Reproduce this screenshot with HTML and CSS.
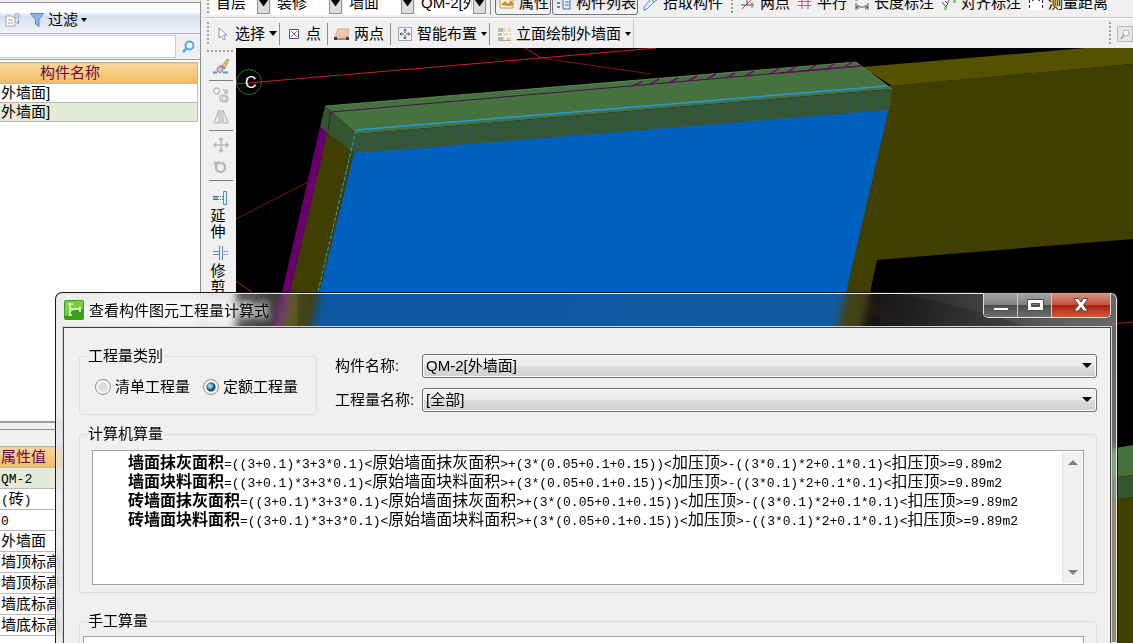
FILE: index.html
```html
<!DOCTYPE html>
<html lang="zh-CN">
<head>
<meta charset="utf-8">
<title>查看构件图元工程量计算式</title>
<link rel="stylesheet" href="styles.css">
</head>
<body>
<div class="app">
  <aside class="side">
    <div class="filter-bar">
      <svg class="ico" viewBox="0 0 16 16"><path d="M1 4h6l3 3v7H1z" fill="#fff" stroke="#a4a8b4"/><path d="M3 8h5M3 11h5M10 2h4v4h-4z" fill="none" stroke="#a4a8b4"/><path d="M13.500 8v3h-2" fill="none" stroke="#6a80b8"/></svg>
      <button class="filter-btn"><svg class="ico" viewBox="0 0 16 16"><path d="M1.500 1.500h13L10 7.500v7L6.500 12V7.500z" fill="#8fb4e8" stroke="#5b84c8"/></svg><span>过滤</span><svg class="caret" viewBox="0 0 6 4"><path d="M0 0h6L3 4z"/></svg></button>
    </div>
    <div class="search">
      <input type="text" aria-label="搜索构件">
      <button aria-label="搜索"><svg class="ico" viewBox="0 0 16 16"><circle cx="9.500" cy="6.500" r="4" fill="#e8f6ff" stroke="#5fa8dc" stroke-width="2"/><path d="M6.500 9.500L3 13" stroke="#5fa8dc" stroke-width="2.500"/></svg></button>
    </div>
    <table class="names">
      <thead><tr><th>构件名称</th></tr></thead>
      <tbody><tr><td>外墙面]</td></tr><tr class="on"><td>外墙面]</td></tr></tbody>
    </table>
    <div class="divider"></div>
    <table class="props">
      <thead><tr><th>属性值</th></tr></thead>
      <tbody>
        <tr class="on"><td><code>QM-2</code></td></tr><tr><td><code>(</code>砖<code>)</code></td></tr><tr><td><code>0</code></td></tr><tr><td>外墙面</td></tr>
        <tr><td>墙顶标高</td></tr><tr><td>墙顶标高</td></tr><tr><td>墙底标高</td></tr><tr><td>墙底标高</td></tr><tr><td></td></tr>
      </tbody>
    </table>
  </aside>

  <main class="work">
    <div class="bar bar-top">
      <i class="grip"></i>
      <span class="combo short"><select aria-label="楼层"><option>首层</option></select><svg viewBox="0 0 12 26"><path d="M1 12h10L6 19z"/></svg></span>
      <span class="combo"><select aria-label="类型"><option>装修</option></select><svg viewBox="0 0 12 26"><path d="M1 12h10L6 19z"/></svg></span>
      <span class="combo"><select aria-label="构件类型"><option>墙面</option></select><svg viewBox="0 0 12 26"><path d="M1 12h10L6 19z"/></svg></span>
      <span class="combo"><select aria-label="构件"><option>QM-2[外墙面]</option></select><svg viewBox="0 0 12 26"><path d="M1 12h10L6 19z"/></svg></span>
      <i class="sep wide"></i>
      <button class="tool on"><svg class="ico" viewBox="0 0 16 16"><path d="M1 1h13v12H1z" fill="#fff3cf" stroke="#c99a50"/><path d="M2 10l4-4 3 3 3-4 3 5-4 1z" fill="#c98a3a"/></svg>属性</button>
      <button class="tool on"><svg class="ico" viewBox="0 0 16 16"><path d="M7 1h7v13H7z" fill="#eef4ff" stroke="#3f66b0"/><path d="M9 4h4M9 7h4M9 10h4" stroke="#3f66b0"/><path d="M1 3h3v2H1zM1 7h3v2H1zM1 11h3v2H1z" fill="#6c7fae"/></svg>构件列表</button>
      <button class="tool"><svg class="ico" viewBox="0 0 16 16"><path d="M1 12l7-8 3 3-7 7-3 1zM8 4l2-3 4 4-3 2z" fill="#dbe9fb" stroke="#5a8acb"/></svg>拾取构件</button>
      <i class="grip spaced"></i>
      <button class="tool"><svg class="ico" viewBox="0 0 16 16"><path d="M7 0v10M1 10h13" stroke="#555"/><path d="M2 14L13 3" stroke="#c04848"/><path d="M12 7v6" stroke="#777"/></svg>两点</button>
      <button class="tool"><svg class="ico" viewBox="0 0 16 16"><path d="M5 1v13M11 1v13" stroke="#5a6cb0"/><path d="M1 6.500h13M1 10.500h13" stroke="#b06868"/></svg>平行</button>
      <button class="tool"><svg class="ico" viewBox="0 0 16 16"><path d="M2 8v7M14 8v7M2 12h12M5 10l-3 2 3 2M11 10l3 2-3 2" fill="none" stroke="#555"/><path d="M1 3h3v3H1z" fill="#85c985"/></svg>长度标注</button>
      <button class="tool"><svg class="ico" viewBox="0 0 16 16"><path d="M1 7l4 5 3-7M4 6l3 3" fill="none" stroke="#555"/><path d="M12 5h3v3h-3zM3 12h3v3H3z" fill="#85c985"/></svg>对齐标注</button>
      <button class="tool"><svg class="ico" viewBox="0 0 16 16"><path d="M1 1h14v14H1z" fill="#fff"/><path d="M1.500 0v15M14.500 0v15M4 6l3-2M12 6L9 4" stroke="#222" stroke-dasharray="3 2"/></svg>测量距离</button>
    </div>
    <div class="bar bar-draw">
      <i class="grip"></i>
      <button class="cmd menu"><svg class="ico" viewBox="0 0 16 16"><path d="M4 2v10l2.500-2 2 4 2-1-2-4H12z" fill="#fff" stroke="#8a93a8"/></svg>选择<svg class="caret big" viewBox="0 0 8 5"><path d="M0 0h8L4 5z"/></svg></button>
      <i class="sep"></i>
      <button class="cmd"><svg class="ico" viewBox="0 0 16 16"><path d="M3.500 3.500h9v9h-9z" fill="#fff" stroke="#3f55b8"/><path d="M5 5l6 6M11 5l-6 6" stroke="#c06060"/></svg>点</button>
      <i class="sep"></i>
      <button class="cmd"><svg class="ico" viewBox="0 0 16 16"><path d="M4 3h11l-1 8H1z" fill="#f4c8ac" stroke="#d8a890"/><path d="M1 13h13" stroke="#333"/><path d="M0 11h3v3H0zM12 11h3v3h-3z" fill="#5a3030"/></svg>两点</button>
      <i class="sep"></i>
      <button class="cmd menu"><svg class="ico" viewBox="0 0 16 16"><path d="M1.500 1.500h13v13h-13z" fill="#eef4fb" stroke="#3c5c90" stroke-dasharray="1 1"/><path d="M8 3v4M8 9v4M3 8h4M9 8h4M6.500 4.500L8 3l1.500 1.500M6.500 11.500L8 13l1.500-1.500M4.500 6.500L3 8l1.500 1.500M11.500 6.500L13 8l-1.500 1.500" fill="none" stroke="#3c4c68"/></svg>智能布置<svg class="caret" viewBox="0 0 6 4"><path d="M0 0h6L3 4z"/></svg></button>
      <i class="sep"></i>
      <button class="cmd menu"><svg class="ico" viewBox="0 0 16 16"><path d="M2 2h13v13H2z" fill="#e6dcb8"/><path d="M2 2h5v13H2z" fill="#b8b8b4"/><path d="M2 6.500h13M2 10.500h13M10.500 2v4M6.500 6.500v4M12.500 6.500v4M9.500 10.500V15" stroke="#fffdf4"/><path d="M2 14.500h13" stroke="#b0a888"/></svg>立面绘制外墙面<svg class="caret" viewBox="0 0 6 4"><path d="M0 0h6L3 4z"/></svg></button>
      <i class="sep light"></i>
      <span class="view-tools"><i class="grip"></i><button class="cmd" aria-label="查看"><svg class="ico" viewBox="0 0 16 16"><path d="M.5 .5h15v15H.5z" fill="#e8e8e8" stroke="#bbb"/><circle cx="9" cy="7" r="3" fill="#fff" stroke="#aaa"/><path d="M7 9l-3 4" stroke="#aaa" stroke-width="2"/></svg></button></span>
    </div>
    <div class="stage">
      <nav class="rail">
        <i class="hgrip"></i>
        <button aria-label="格式刷"><svg viewBox="0 0 18 18"><path d="M1 14.500h4M11 14.500h5" stroke="#5a9aa8" stroke-width="2"/><path d="M10 8l5-7 2 1-4 8z" fill="#e8bf66" stroke="#8a7040" stroke-width=".6"/><path d="M8 7l5 4" stroke="#8090b8" stroke-width="1.500"/><ellipse cx="8" cy="11.500" rx="3" ry="3" fill="#d6bcd2" stroke="#8f84a0"/></svg></button>
        <hr>
        <button aria-label="复制"><svg viewBox="0 0 18 18"><g fill="none" stroke="#bababa" stroke-width="1.300"><circle cx="4.500" cy="5" r="3"/><circle cx="11" cy="12" r="3.200"/><circle cx="13" cy="13" r="3"/><path d="M11 3l4 4M15 3v4h-3"/></g></svg></button>
        <button aria-label="镜像"><svg viewBox="0 0 18 18"><path d="M7 2v13H2zM11 2v13h5zM9 2v14" fill="none" stroke="#acacac"/></svg></button>
        <hr>
        <button aria-label="移动"><svg viewBox="0 0 18 18"><path d="M9 2v14M2 9h14M7 4l2-2 2 2M7 14l2 2 2-2M4 7L2 9l2 2M14 7l2 2-2 2" fill="none" stroke="#b8b8b8" stroke-width="1.500"/></svg></button>
        <button aria-label="旋转"><svg viewBox="0 0 18 18"><path d="M4 6v3.500a4.500 4.500 0 0 0 9 0Q13 5 8.500 5" fill="none" stroke="#b8b8b8" stroke-width="2.500"/><path d="M2 3.500h6v3H2z" fill="#b8b8b8"/></svg></button>
        <hr>
        <button class="text"><svg viewBox="0 0 18 18"><path d="M12.500 2.500h3v13h-3z" fill="#e4f0ff" stroke="#6088c0"/><path d="M2 7.500h6M2 10.500h6M2 9h5" stroke="#446cac"/><path d="M9 7.500h3M9 10.500h3" stroke="#446cac" stroke-dasharray="1 1"/></svg><span>延</span><span>伸</span></button>
        <button class="text"><svg viewBox="0 0 18 18"><path d="M8.500 2v14M11.500 2v14M2 7.500h6.500M2 10.500h6.500" fill="none" stroke="#6088c0"/><path d="M12.500 7.500H17M12.500 10.500H17" stroke="#6088c0" stroke-dasharray="2 1"/></svg><span>修</span><span>剪</span></button>
      </nav>
      <svg class="scene" viewBox="236 48 897 595" preserveAspectRatio="xMinYMin slice">
        <defs><pattern id="grain" width="7" height="5" patternUnits="userSpaceOnUse"><path d="M0 0h7v5H0z" fill="#36562f"/><path d="M0 0h2v1H0zM3 1h1v1H3zM1 3h1v1H1zM5 2h1v1H5zM4 4h1v1H4z" fill="#2c5664"/></pattern></defs>
        <path d="M236 48h897v595H236z" fill="#000"/>
        <g fill="none" stroke="#b81c1c">
          <path d="M236 84L541 58L656 48M525 48l16 10" stroke="#d02020"/><path d="M541 58l110 16M236 219l86-44" stroke="#801414"/><path d="M236 281l34 24"/><path d="M868 305l22 14M1110 324l23-2"/>
        </g>
        <circle cx="249" cy="82" r="12.500" fill="none" stroke="#1c7a1c"/>
        <text x="245" y="88" fill="#fff" font-size="16">C</text>
        <path d="M862 67L1085 48h48v16L892 86z" fill="#545200"/>
        <path d="M888 86L1133 64v175L877 260l-17 80h-30z" fill="#403f00"/>
        <path d="M320 127l9 5-49 208h-9z" fill="#66006a"/>
        <path d="M328 131l27 20-44 189h-32z" fill="#403f00"/>
        <path d="M355 149L889 108l-54 232H308z" fill="#0060c0"/>
        <path d="M325 106L856 62l36 27L357 134z" fill="#467240"/>
        <path d="M325 106l32 28-3 19-34-26z" fill="#355530"/>
        <path d="M357 134L892 89l-3 21L360 153l-8-4z" fill="url(#grain)"/>
        <path d="M325 106L856 62l36 27" fill="none" stroke="#72946a" stroke-width=".7"/>
        <path d="M328 131l3-19L860 66" fill="none" stroke="#481048"/>
        <path d="M632 86l10-4M650 84l9-5M669 83l9-5M688 81l9-5M707 79l9-5M726 78l9-5M745 76l9-5M770 74l9-6M788 72l9-6M807 71l9-6M825 70l9-6M843 68l9-6M780 73l81-7" stroke="#680b68" stroke-width="1.500"/>
        <path d="M356 130L887 86" stroke="#239cdc" stroke-width="1.500"/>
        <path d="M356 130L318 292" stroke="#20a5dc" stroke-dasharray="4 2"/>
        <path d="M1110 449l23-4v30l-23 3z" fill="#467240"/><path d="M1110 478l23-3v22l-23 3z" fill="#355530"/><path d="M1110 500l23-3v146h-23z" fill="#403f00"/>
        <path d="M1110 474l23-2" stroke="#6b6410"/>
      </svg>
    </div>
  </main>
</div>

<section class="dialog" role="dialog" aria-labelledby="dlg-title">
  <svg class="shine" viewBox="0 0 1060 34" preserveAspectRatio="none"><path d="M240 0h602q70 12 130 34H240z" fill="#000" fill-opacity=".18"/></svg>
  <header class="title">
    <svg class="logo" viewBox="0 0 20 20"><rect width="20" height="20" rx="2" fill="#3a9e1c"/><path d="M1 1h18v8Q9 8 1 17z" fill="#76d03a"/><path d="M6 3v11M4 15h4M6 9h10M16 7v5M4 4h5" fill="none" stroke="#e8ffd8" stroke-width="1.500"/></svg>
    <h1 id="dlg-title">查看构件图元工程量计算式</h1>
    <div class="win-btns">
      <button aria-label="最小化"><svg viewBox="0 0 24 20"><path d="M4.500 12.500h15v3h-15z" fill="#fff" stroke="#555"/></svg></button>
      <button aria-label="最大化"><svg viewBox="0 0 24 20"><path d="M4.500 4.500h16v11h-16zM8.500 8.500h8v3h-8z" fill="#fff" fill-rule="evenodd" stroke="#444a58"/></svg></button>
      <button class="close" aria-label="关闭"><svg viewBox="0 0 24 20"><path d="M5 3.500h4.500l2.500 3.500 2.500-3.500H19L14.500 10l4.500 6h-4.500L12 12.500 9.500 16H5l4.500-6z" fill="#fff" stroke="#56444c"/></svg></button>
    </div>
  </header>
  <div class="body">
    <div class="top">
      <fieldset class="kinds">
        <legend>工程量类别</legend>
        <label><input type="radio" name="kind">清单工程量</label>
        <label><input type="radio" name="kind" checked>定额工程量</label>
      </fieldset>
      <div class="fields">
        <label for="comp">构件名称:</label>
        <span class="drop"><select id="comp"><option>QM-2[外墙面]</option></select><svg viewBox="0 0 10 5"><path d="M0 0h10L5 5z"/></svg></span>
        <label for="qty">工程量名称:</label>
        <span class="drop"><select id="qty"><option>[全部]</option></select><svg viewBox="0 0 10 5"><path d="M0 0h10L5 5z"/></svg></span>
      </div>
    </div>
    <fieldset class="calc">
      <legend>计算机算量</legend>
      <div class="sheet">
        <div class="lines">
          <p><b>墙面抹灰面积</b><code>=((3+0.1)*3+3*0.1)&lt;</code>原始墙面抹灰面积<code>&gt;+(3*(0.05+0.1+0.15))&lt;</code>加压顶<code>&gt;-((3*0.1)*2+0.1*0.1)&lt;</code>扣压顶<code>&gt;=9.89m2</code></p>
          <p><b>墙面块料面积</b><code>=((3+0.1)*3+3*0.1)&lt;</code>原始墙面块料面积<code>&gt;+(3*(0.05+0.1+0.15))&lt;</code>加压顶<code>&gt;-((3*0.1)*2+0.1*0.1)&lt;</code>扣压顶<code>&gt;=9.89m2</code></p>
          <p><b>砖墙面抹灰面积</b><code>=((3+0.1)*3+3*0.1)&lt;</code>原始墙面抹灰面积<code>&gt;+(3*(0.05+0.1+0.15))&lt;</code>加压顶<code>&gt;-((3*0.1)*2+0.1*0.1)&lt;</code>扣压顶<code>&gt;=9.89m2</code></p>
          <p><b>砖墙面块料面积</b><code>=((3+0.1)*3+3*0.1)&lt;</code>原始墙面块料面积<code>&gt;+(3*(0.05+0.1+0.15))&lt;</code>加压顶<code>&gt;-((3*0.1)*2+0.1*0.1)&lt;</code>扣压顶<code>&gt;=9.89m2</code></p>
        </div>
        <div class="scroll">
          <svg viewBox="0 0 10 5"><path d="M0 5h10L5 0z"/></svg>
          <svg viewBox="0 0 10 5"><path d="M0 0h10L5 5z"/></svg>
        </div>
      </div>
    </fieldset>
    <fieldset class="hand">
      <legend>手工算量</legend>
      <div class="sheet"></div>
    </fieldset>
  </div>
</section>
</body>
</html>
```
FILE: styles.css
```css
* { box-sizing: border-box; }
body {
  margin: 0; height: 100vh; overflow: hidden; background: #f0f0f0; color: #000;
  font: 15px/20px "Liberation Sans", "Noto Sans CJK SC", sans-serif;
}
button, input, select { font: inherit; color: inherit; }
button { border: 0; background: none; padding: 0; margin: 0; white-space: nowrap; }
svg { display: block; flex: none; }
code { font: 13px/16px "Liberation Mono", monospace; }
.ico { width: 16px; height: 16px; }
.caret { width: 6px; height: 4px; }
.caret.big { width: 8px; height: 5px; }

.app { display: flex; height: 100vh; overflow: hidden; }

/* left panels */
.side {
  width: 201px; flex: none; display: flex; flex-direction: column; overflow: hidden;
  border-right: 1px solid #8c8c94; border-top: 2px solid #f0f0f0; background: #fff;
}
.filter-bar {
  display: flex; align-items: center; gap: 8px; height: 32px; padding: 3px 5px 0; flex: none;
  border-top: 1px solid #8c8c94; border-bottom: 1px solid #b4b8c8;
  background: linear-gradient(#fbfcfe 0 30%, #d6deef 45%, #f0f3fa);
}
.filter-btn { display: flex; align-items: center; gap: 3px; }
.search { display: flex; height: 26px; flex: none; border-bottom: 1px solid #a0a0a4; background: #f0f0f0; }
.search input { flex: 1; min-width: 0; margin: 1px 0; border: 1px solid #c8ccd4; border-left: 0; background: #fff; padding: 0 4px; }
.search button { width: 24px; display: grid; place-items: center; }
table { border-collapse: collapse; flex: none; }
th {
  font-weight: normal; color: #6a0840; text-align: left;
  background: linear-gradient(#f8d69a, #f2bd60);
}
td, th { border: 1px solid #b8b8b8; border-left: 0; white-space: nowrap; }
tr.on td { background: #e4ecd8; }
.names { width: 198px; margin-top: 2px; }
.names th { height: 21px; padding: 0 0 0 40px; line-height: 18px; }
.names td { height: 19px; padding: 0 0 0 1px; line-height: 18px; }
.divider { margin-top: auto; height: 25px; flex: none; border-top: 2px solid #9c9ca0; background: linear-gradient(#f0f0f0 6px, #8c8c8c 6px 7px, #f0f0f0 7px); }
.props { width: 201px; margin-bottom: -14px; }
.props td, .props th { height: 21px; padding: 0 0 0 1px; line-height: 18px; }

/* toolbars */
.work { flex: 1; min-width: 0; margin-left: 4px; display: flex; flex-direction: column; }
.bar { display: flex; padding-left: 2px; flex: none; overflow: hidden; }
.bar-top { height: 18px; align-items: flex-end; gap: 1px; padding-bottom: 2px; border-bottom: 1px solid #c8c8c8; }
.bar-draw { height: 30px; align-items: center; border-top: 1px solid #fff; }
.grip { width: 2px; height: 24px; flex: none; background: repeating-linear-gradient(#a0a0a0 0 2px, #f0f0f0 2px 4px); }
.grip.spaced { margin: 0 2px 0 5px; }
.sep { width: 1px; height: 22px; flex: none; background: #909090; }
.sep.wide { margin: 0 3px; }
.sep.light { height: 30px; background: #c8c8c8; }
.combo { display: flex; position: relative; width: 71px; height: 24px; flex: none; }
.combo.short { width: 60px; }
.combo select { appearance: none; width: 100%; height: 24px; border: 0; background: #fff; padding: 0 14px 0 6px; margin: 0; }
.combo svg { position: absolute; right: 0; bottom: 1px; width: 13px; height: 26px; background: #dcdcdc; border: 1px solid #909090; pointer-events: none; }
.tool { display: flex; align-items: center; gap: 4px; height: 24px; padding: 0 2px 0 4px; flex: none; }
.tool.on { border: 1px solid #707078; border-radius: 3px; background: linear-gradient(#e0e0e4, #f4f4f6); padding: 0 1px 0 3px; }
.cmd { display: flex; align-items: center; gap: 4px; padding: 0 6px; flex: none; }
.cmd.menu { padding-right: 2px; }
.view-tools { margin-left: auto; display: flex; align-items: center; width: 24px; overflow: hidden; }

/* vertical toolbar and model view */
.stage { flex: 1; min-height: 0; display: flex; }
.rail { width: 31px; flex: none; display: flex; flex-direction: column; align-items: center; overflow: hidden; }
.rail svg { width: 18px; height: 18px; }
.rail button { height: 22px; display: grid; place-items: center; flex: none; }
.rail button.text { height: auto; display: flex; flex-direction: column; align-items: center; line-height: 15px; margin-top: 5px; gap: 1px; }
.rail .text span { margin-right: 5px; }
.rail hr { width: 24px; margin: 2px 0 3px; border: 0; height: 1px; background: #808080; flex: none; }
.hgrip { height: 2px; width: 28px; margin: 2px 0 4px; flex: none; background: repeating-linear-gradient(90deg, #a0a0a0 0 2px, #f0f0f0 2px 4px); }
.scene { flex: 1; min-width: 0; height: 100%; background: #000; }

/* calculation dialog floating over the workspace */
.dialog {
  position: absolute; left: 55px; right: 15px; top: 292px; bottom: 0; overflow: hidden;
  display: flex; flex-direction: column; padding: 0 6px 0 7px;
  border: 1px solid #181818; border-bottom: 0; border-radius: 7px 7px 0 0;
  box-shadow: inset 0 0 0 1px #e8e8e8;
  background: linear-gradient(100deg, #e4e4e4aa 0, #e4e4e466 180px, #ffffff10 260px, #ffffff18 800px, #ffffff60 1000px, #ffffff70);
  backdrop-filter: blur(4px);
}
.shine { position: absolute; left: 1px; top: 1px; width: 100%; height: 34px; }
.title { position: relative; display: flex; align-items: center; height: 34px; flex: none; gap: 5px; padding: 0 0 0 1px; }
.logo { width: 20px; height: 20px; }
.title h1 {
  margin: 2px 0 0; font-size: 15px; font-weight: normal; white-space: nowrap;
  text-shadow: 0 0 6px #fff, 0 0 8px #fff, 0 0 10px #ffffffaa;
}
.win-btns { margin-left: auto; align-self: flex-start; display: flex; height: 25px; border: 1px solid #e0e0e0; border-top: 0; border-radius: 0 0 5px 5px; overflow: hidden; }
.win-btns button { width: 34px; display: grid; place-items: center; border-right: 1px solid #c8c8c8; background: linear-gradient(#a8a8a8, #808080 48%, #484a4e 50%, #6c6e72); }
.win-btns .close { width: 58px; border-right: 0; background: linear-gradient(#d89488, #c45440 48%, #a82010 50%, #d05a38); }
.win-btns svg { width: 24px; height: 20px; }

.body {
  position: relative; flex: 1; min-height: 0; overflow: hidden; background: #f0f0f0;
  border: 1px solid #404040; border-bottom: 0; box-shadow: 0 0 0 1px #d8d8d8; padding: 18px 13px 0 15px;
}
fieldset { margin: 0; min-width: 0; border: 1px solid #d5dfe5; border-radius: 3px; }
legend { padding: 0 1px; height: 20px; }
.kinds legend { margin-left: -8px; }
.calc legend { margin-left: -5px; }
.hand legend { margin-left: 4px; }
.top { display: flex; gap: 18px; }
.kinds { width: 238px; height: 69px; flex: none; display: flex; align-items: flex-start; gap: 13px; padding: 11px 0 0 15px; }
.kinds label { display: flex; align-items: center; gap: 4px; white-space: nowrap; }
.kinds input {
  appearance: none; width: 16px; height: 16px; margin: 0; border: 1px solid #8e8f8f; border-radius: 50%;
  background: radial-gradient(circle, #dcdcdc 0 4px, #fafafa 6px);
}
.kinds input:checked { background: radial-gradient(circle at 6px 6px, #a0e0f8 0 1px, #2070a800 4px), radial-gradient(circle, #1c5c90 0 3px, #103858 4px, #f4f4f4 5px); }
.fields { flex: 1; min-width: 0; display: grid; grid-template-columns: 87px 1fr; grid-auto-rows: 24px; row-gap: 10px; align-items: center; padding-top: 8px; align-content: start; margin-bottom: -1px; }
.fields label { white-space: nowrap; }
.drop { position: relative; display: flex; }
.drop select {
  appearance: none; width: 100%; height: 24px; margin: 0; padding: 0 24px 0 3px; line-height: 20px;
  border: 1px solid #707070; border-radius: 3px; box-shadow: inset 0 0 0 1px #fafafa;
  background: linear-gradient(#f2f2f2, #ebebeb 50%, #dddddd 50%, #cfcfcf);
}
.drop svg { position: absolute; right: 5px; top: 9px; width: 10px; height: 5px; pointer-events: none; }
.calc { margin-top: 9px; height: 169px; padding: 6px 12px 7px; }
.sheet { height: 135px; display: flex; background: #fff; border: 1px solid #a0a0a4; }
.lines { flex: 1; min-width: 0; overflow: hidden; padding: 2px 0 0 35px; font-size: 16px; line-height: 19px; }
.lines p { margin: 0; white-space: nowrap; height: 19px; }
.scroll { width: 20px; margin: 1px; flex: none; display: flex; flex-direction: column; justify-content: space-between; align-items: center; padding: 8px 0; background: #f0f0f0; border-left: 1px solid #e4e4e4; }
.scroll svg { width: 10px; height: 5px; fill: #808080; }
.hand { margin-top: 18px; padding: 5px 12px 8px 3px; }
```
